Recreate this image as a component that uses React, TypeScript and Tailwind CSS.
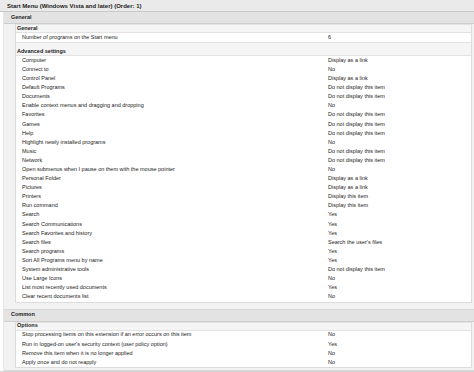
import React from 'react';

type Row = [string, string];

const generalRows: Row[] = [['Number of programs on the Start menu', '6']];

const advancedRows: Row[] = [
    ['Computer', 'Display as a link'],
    ['Connect to', 'No'],
    ['Control Panel', 'Display as a link'],
    ['Default Programs', 'Do not display this item'],
    ['Documents', 'Do not display this item'],
    ['Enable context menus and dragging and dropping', 'No'],
    ['Favorites', 'Do not display this item'],
    ['Games', 'Do not display this item'],
    ['Help', 'Do not display this item'],
    ['Highlight newly installed programs', 'No'],
    ['Music', 'Do not display this item'],
    ['Network', 'Do not display this item'],
    ['Open submenus when I pause on them with the mouse pointer', 'No'],
    ['Personal Folder', 'Display as a link'],
    ['Pictures', 'Display as a link'],
    ['Printers', 'Display this item'],
    ['Run command', 'Display this item'],
    ['Search', 'Yes'],
    ['Search Communications', 'Yes'],
    ['Search Favorites and history', 'Yes'],
    ['Search files', "Search the user's files"],
    ['Search programs', 'Yes'],
    ['Sort All Programs menu by name', 'Yes'],
    ['System administrative tools', 'Do not display this item'],
    ['Use Large Icons', 'No'],
    ['List most recently used documents', 'Yes'],
    ['Clear recent documents list', 'No'],
];

const optionRows: Row[] = [
    ['Stop processing items on this extension if an error occurs on this item', 'No'],
    ["Run in logged-on user's security context (user policy option)", 'Yes'],
    ['Remove this item when it is no longer applied', 'No'],
    ['Apply once and do not reapply', 'No'],
];

function SectionHeader({ title }: { title: string }) {
    return (
        <div className="h-[12px] flex items-center pl-[7px] bg-[#e3e3e3] border-b border-[#cdcdcd] font-bold">
            {title}
        </div>
    );
}

function SubHeader({ title, tall }: { title: string; tall?: boolean }) {
    return (
        <div
            className={`${tall ? 'h-[14px] pt-[5px]' : 'h-[9px]'} flex items-center pl-[1px] bg-[#f5f5f5] border-y border-[#e2e2e2] font-bold`}
        >
            {title}
        </div>
    );
}

function Rows({ rows }: { rows: Row[] }) {
    return (
        <div className="bg-white">
            {rows.map(([label, value]) => (
                <div key={label} className="grid grid-cols-[306px_1fr] h-[9.1px] items-center pl-[6px]">
                    <span className="whitespace-nowrap">{label}</span>
                    <span className="whitespace-nowrap">{value}</span>
                </div>
            ))}
        </div>
    );
}

export default function App() {
    return (
        <div
            className="w-[474px] h-[372px] overflow-hidden bg-white text-[#1b1b1b] text-[5.5px] leading-none"
            style={{ fontFamily: '"Liberation Sans", Arial, sans-serif' }}
        >
            {/* Title */}
            <div className="h-[12px] flex items-center pl-[7px] bg-[#eaeaea] border-b border-[#c9c9c9] font-bold text-[6px]">
                Start Menu (Windows Vista and later) (Order: 1)
            </div>

            {/* General section */}
            <div className="ml-[3px] border-l border-[#e6e6e6]">
                <SectionHeader title="General" />
                <div className="bg-[#f2f2f2] pb-[6px] border-b border-[#d8d8d8]">
                    <div className="ml-[11px] mr-[2px] border-l border-r border-b border-[#dcdcdc] bg-white">
                        <SubHeader title="General" />
                        <Rows rows={generalRows} />
                        <SubHeader title="Advanced settings" tall />
                        <Rows rows={advancedRows} />
                    </div>
                </div>

                {/* Common section */}
                <SectionHeader title="Common" />
                <div className="bg-[#f2f2f2] pb-[2px] border-b border-[#d8d8d8]">
                    <div className="ml-[11px] mr-[2px] border-l border-r border-b border-[#dcdcdc] bg-white">
                        <SubHeader title="Options" />
                        <Rows rows={optionRows} />
                    </div>
                </div>
            </div>
            <div className="h-[4px] bg-[#d4d4d4]" />
        </div>
    );
}
